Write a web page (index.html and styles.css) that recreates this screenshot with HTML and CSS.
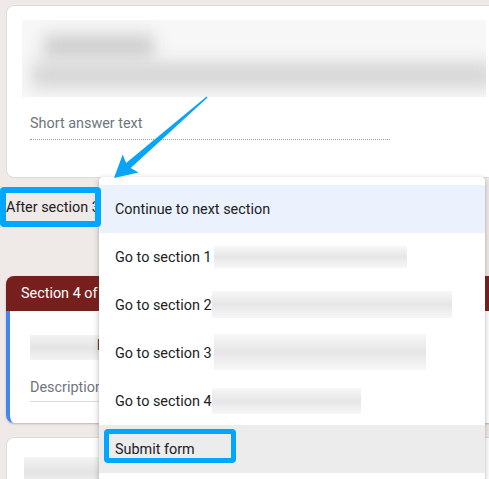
FILE: index.html
```html
<!DOCTYPE html>
<html>
<head>
<meta charset="utf-8">
<link rel="stylesheet" href="styles.css">
</head>
<body>
<div class="page">
  <div class="card q-card">
    <div class="redacted-title">
      <div class="blur-bar bar-a"></div>
      <div class="blur-bar bar-b"></div>
    </div>
    <div class="short-answer">Short answer text</div>
  </div>

  <div class="after-row">After section 3</div>

  <div class="card section-card">
    <div class="section-head">Section 4 of 4</div>
    <div class="section-body">
      <div class="sec-title"><span class="blur-block"></span><span class="cut-char">l</span></div>
      <div class="description">Description</div>
    </div>
  </div>

  <div class="card next-card">
    <div class="blur-block next-blur"></div>
  </div>
</div>

<div class="menu">
  <div class="menu-item selected">Continue to next section</div>
  <div class="menu-item">Go to section 1 <span class="redact r1"></span></div>
  <div class="menu-item">Go to section 2 <span class="redact r2"></span></div>
  <div class="menu-item">Go to section 3 <span class="redact r3"></span></div>
  <div class="menu-item">Go to section 4 <span class="redact r4"></span></div>
  <div class="menu-item hovered">Submit form</div>
</div>

<div class="callout callout-after"></div>
<div class="callout callout-submit"></div>

<svg class="arrow" width="489" height="479" viewBox="0 0 489 479">
  <polygon points="114,178 138.5,172.6 130.7,168.1 207.6,97.6 206.6,96.4 126.1,162.9 122.7,154.4" fill="#08a4f5"/>
</svg>
</body>
</html>
```
FILE: styles.css
```css
html, body {
  margin: 0;
  padding: 0;
  overflow: hidden;
}
body {
  width: 489px;
  height: 479px;
  background: #efe9e7;
  font-family: Roboto, "Noto Sans", sans-serif;
  color: #202124;
  position: relative;
}
.page {
  padding: 5px 0 0 6px;
  display: flex;
  flex-direction: column;
}
.card {
  background: #fff;
  width: 500px;
  box-sizing: border-box;
}
.q-card {
  height: 173px;
  border: 1px solid #dadce0;
  border-radius: 8px;
  padding: 14px 0 0 15px;
}
.redacted-title {
  width: 464px;
  height: 77px;
  background: #f7f7f7;
  overflow: hidden;
  display: flex;
  flex-direction: column;
}
.blur-bar {
  background: #d0d0d0;
  filter: blur(8px);
}
.bar-a {
  width: 110px;
  height: 26px;
  margin: 14px 0 0 22px;
}
.bar-b {
  width: 460px;
  height: 26px;
  margin: 2px 0 0 10px;
  background: #d6d6d6;
}
.short-answer {
  margin: 17px 0 0 8px;
  width: 360px;
  font-size: 14.4px;
  line-height: 20px;
  color: #70757a;
  padding-bottom: 5px;
  border-bottom: 1px dotted #9aa0a6;
}
.after-row {
  margin-top: 10px;
  height: 40px;
  line-height: 40px;
  font-size: 14.4px;
  color: #202124;
}
.section-card {
  margin-top: 48px;
  background: transparent;
  border-radius: 8px;
  box-shadow: 0 1px 2px rgba(60, 64, 67, 0.3);
}
.section-head {
  height: 35px;
  background: #771f1d;
  color: #fff;
  border-radius: 8px 8px 0 0;
  padding-left: 15px;
  font-size: 14.4px;
  line-height: 36px;
}
.section-body {
  height: 112px;
  box-sizing: border-box;
  background: #fff;
  border-left: 4px solid #4285f4;
  border-radius: 0 0 8px 8px;
  padding: 24px 0 0 20px;
}
.sec-title {
  display: flex;
  align-items: flex-start;
  height: 25px;
}
.blur-block {
  display: block;
  width: 70px;
  height: 25px;
  background: linear-gradient(#f3f3f3, #e4e4e4 50%, #f3f3f3);
}
.cut-char {
  font-size: 14.4px;
  line-height: 22px;
  margin-left: -3px;
}
.description {
  margin-top: 18px;
  width: 360px;
  font-size: 14.4px;
  line-height: 20px;
  color: #70757a;
  padding-bottom: 3px;
  border-bottom: 1px solid #dadce0;
}
.next-card {
  margin-top: 14px;
  height: 60px;
  border-radius: 8px 8px 0 0;
  border: 1px solid #dadce0;
  padding: 19px 0 0 17px;
}
.next-blur {
  width: 76px;
  height: 30px;
}
.menu {
  position: absolute;
  left: 99px;
  top: 177px;
  width: 386px;
  background: #fff;
  border-radius: 4px;
  box-shadow: 0 2px 6px rgba(60, 64, 67, 0.3), 0 1px 2px rgba(60, 64, 67, 0.2);
  padding: 8px 0;
}
.menu-item {
  height: 48px;
  display: flex;
  align-items: center;
  padding-left: 16px;
  font-size: 14.4px;
  color: #202124;
  white-space: pre;
}
.menu-item.selected {
  background: #ebf2fd;
}
.menu-item.hovered {
  background: #ececec;
}
.redact {
  display: inline-block;
  background: linear-gradient(#f7f7f7, #e6e6e6 50%, #f7f7f7);
}
.r1 { width: 193px; height: 22px; margin-left: -1px; }
.r2 { width: 240px; height: 27px; margin-left: -3px; margin-top: -2px; }
.r3 { width: 212px; height: 36px; margin-left: -1px; margin-top: -2px; }
.r4 { width: 149px; height: 26px; margin-left: -3px; }
.callout {
  position: absolute;
  border: 6px solid #00a6ff;
  border-radius: 4px;
  box-sizing: border-box;
}
.callout-after {
  left: 0;
  top: 187px;
  width: 101px;
  height: 40px;
}
.callout-submit {
  left: 104px;
  top: 429px;
  width: 132px;
  height: 34px;
  border-width: 5px;
}
.arrow {
  position: absolute;
  left: 0;
  top: 0;
  pointer-events: none;
}
```
